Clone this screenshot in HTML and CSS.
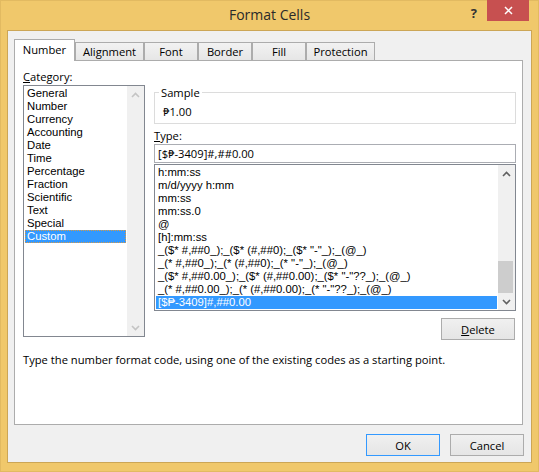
FILE: index.html
```html
<!DOCTYPE html>
<html>
<head>
<meta charset="utf-8">
<title>Format Cells</title>
<link rel="stylesheet" href="styles.css">
</head>
<body>
<div class="window">
  <div class="titlebar">
    <div></div>
    <div class="title">Format Cells</div>
    <div class="controls">
      <span class="help">?</span>
      <span class="close"><svg width="9" height="9" viewBox="0 0 9 9"><path d="M1 1L8 8M8 1L1 8" stroke="#fff" stroke-width="1.5" fill="none"/></svg></span>
    </div>
  </div>
  <div class="client">
    <div class="tabs">
      <div class="tab active tab-number">Number</div>
      <div class="tab tab-alignment">Alignment</div>
      <div class="tab tab-font">Font</div>
      <div class="tab tab-border">Border</div>
      <div class="tab tab-fill">Fill</div>
      <div class="tab tab-protection">Protection</div>
    </div>
    <div class="panel">
      <div class="cat-label"><u>C</u>ategory:</div>
      <div></div>
      <div class="listbox cat">
        <ul class="items">
          <li>General</li>
          <li>Number</li>
          <li>Currency</li>
          <li>Accounting</li>
          <li>Date</li>
          <li>Time</li>
          <li>Percentage</li>
          <li>Fraction</li>
          <li>Scientific</li>
          <li>Text</li>
          <li>Special</li>
          <li class="sel">Custom</li>
        </ul>
        <div class="vscroll disabled">
          <div class="arrow"><svg width="9" height="6" viewBox="0 0 9 6"><path d="M1 5L4.5 1.5L8 5" fill="none" stroke="#C4C4C4" stroke-width="1.6"/></svg></div>
          <div class="track"></div>
          <div class="arrow"><svg width="9" height="6" viewBox="0 0 9 6"><path d="M1 1L4.5 4.5L8 1" fill="none" stroke="#C4C4C4" stroke-width="1.6"/></svg></div>
        </div>
      </div>
      <div class="right">
        <fieldset class="sample">
          <legend>Sample</legend>
          <div class="sample-val">₱1.00</div>
        </fieldset>
        <div class="type-label"><u>T</u>ype:</div>
        <div class="type-input">[$₱-3409]#,##0.00</div>
        <div class="listbox types">
          <ul class="items">
            <li>h:mm:ss</li>
            <li>m/d/yyyy h:mm</li>
            <li>mm:ss</li>
            <li>mm:ss.0</li>
            <li>@</li>
            <li>[h]:mm:ss</li>
            <li>_($* #,##0_);_($* (#,##0);_($* "-"_);_(@_)</li>
            <li>_(* #,##0_);_(* (#,##0);_(* "-"_);_(@_)</li>
            <li>_($* #,##0.00_);_($* (#,##0.00);_($* "-"??_);_(@_)</li>
            <li>_(* #,##0.00_);_(* (#,##0.00);_(* "-"??_);_(@_)</li>
            <li class="sel">[$₱-3409]#,##0.00</li>
          </ul>
          <div class="vscroll">
            <div class="arrow"><svg width="9" height="6" viewBox="0 0 9 6"><path d="M1 5L4.5 1.5L8 5" fill="none" stroke="#606060" stroke-width="1.6"/></svg></div>
            <div class="track"><div class="thumb"></div></div>
            <div class="arrow"><svg width="9" height="6" viewBox="0 0 9 6"><path d="M1 1L4.5 4.5L8 1" fill="none" stroke="#606060" stroke-width="1.6"/></svg></div>
          </div>
        </div>
        <div class="delete-row"><button class="btn"><u>D</u>elete</button></div>
      </div>
      <div class="hint">Type the number format code, using one of the existing codes as a starting point.</div>
    </div>
    <div class="footer">
      <button class="btn default">OK</button>
      <button class="btn">Cancel</button>
    </div>
  </div>
</div>
</body>
</html>
```

FILE: styles.css
```css
* { box-sizing: border-box; }
html, body { margin: 0; padding: 0; }
body {
  width: 539px;
  height: 472px;
  overflow: hidden;
  font-family: "Open Sans", "Noto Sans", "DejaVu Sans", sans-serif;
  font-size: 11.2px;
  color: #000;
}
.window {
  width: 539px;
  height: 472px;
  background: #F0C86B;
  box-shadow: inset 0 0 0 1px #E2BA61;
  display: flex;
  flex-direction: column;
  padding: 0 7px 9px;
}
.titlebar {
  height: 30px;
  flex: none;
  display: grid;
  grid-template-columns: 1fr auto 1fr;
}
.title {
  align-self: center;
  font-size: 14px;
  line-height: 18px;
  color: #2a2a2a;
}
.controls {
  justify-self: end;
  display: flex;
  align-items: flex-start;
  margin-right: 3px;
}
.help {
  font-weight: bold;
  font-size: 13px;
  line-height: 16px;
  color: #333;
  margin-top: 5px;
  margin-right: 10px;
}
.close {
  width: 42px;
  height: 21px;
  background: #C75050;
  display: flex;
  align-items: center;
  justify-content: center;
}
.client {
  flex: 1;
  border: 1px solid #CCA656;
  background: #F0F0F0;
  padding: 8px 8px 6px 6px;
  display: flex;
  flex-direction: column;
}
.tabs {
  display: flex;
  align-items: flex-end;
  margin-bottom: -1px;
  position: relative;
  z-index: 1;
}
.tab {
  height: 18px;
  border: 1px solid #ACACAC;
  border-bottom: 0;
  margin-bottom: 1px;
  background: linear-gradient(#F2F2F2, #E6E6E6);
  text-align: center;
  line-height: 18px;
  white-space: nowrap;
}
.tab.active {
  height: 22px;
  margin-bottom: 0;
  background: #fff;
  line-height: 20px;
}
.tab-number { width: 61px; }
.tab-alignment { width: 69px; }
.tab-font { width: 54px; }
.tab-border { width: 54px; }
.tab-fill { width: 54px; }
.tab-protection { width: 69px; }
.panel {
  height: 365px;
  flex: none;
  border: 1px solid #ACACAC;
  background: #fff;
  padding: 7px 0 0 8px;
  display: grid;
  grid-template-columns: 122px 362px;
  grid-template-rows: 17px 255px auto;
  column-gap: 9px;
  align-content: start;
}
.cat-label { line-height: 17px; }
.listbox {
  border: 1px solid #828790;
  background: #fff;
  display: flex;
}
.cat { height: 252px; }
.items {
  flex: 1;
  min-width: 0;
  margin: 0;
  padding: 1px;
  list-style: none;
  overflow: hidden;
  font-family: "Liberation Sans", Arial, sans-serif;
  font-size: 11.3px;
}
.items li {
  height: 13px;
  line-height: 13px;
  padding-left: 2px;
  white-space: nowrap;
}
.items li.sel {
  background: #3399FF;
  color: #fff;
}
.cat li.sel {
  outline: 1px dotted #D99A45;
  outline-offset: -1px;
}
.vscroll {
  width: 17px;
  flex: none;
  background: #F0F0F0;
  display: flex;
  flex-direction: column;
}
.arrow {
  height: 17px;
  display: flex;
  align-items: center;
  justify-content: center;
}
.track {
  flex: 1;
  display: flex;
  flex-direction: column;
  justify-content: flex-end;
}
.thumb {
  height: 32px;
  background: #CDCDCD;
  margin: 0 2px 0 0;
}
.right {
  display: flex;
  flex-direction: column;
}
.sample {
  margin: 0;
  border: 1px solid #DCDCDC;
  padding: 0 4px 3px 4px;
  min-width: 0;
}
.sample legend {
  padding: 0 2px;
  line-height: 15px;
}
.sample-val {
  margin: 4px 0 0 4px;
  line-height: 16px;
}
.type-label {
  margin-top: 4px;
  line-height: 16px;
}
.type-input {
  height: 19px;
  border: 1px solid #ABADB3;
  padding-left: 3px;
  line-height: 17px;
  white-space: nowrap;
}
.types {
  margin-top: 1px;
  height: 147px;
}
.delete-row {
  display: flex;
  justify-content: flex-end;
  margin-top: 7px;
  margin-right: 1px;
}
.btn {
  width: 74px;
  height: 22px;
  border: 1px solid #ACACAC;
  background: linear-gradient(#F0F0F0, #E5E5E5);
  font: inherit;
  color: #000;
  padding: 0;
}
.btn.default { border-color: #3399FF; }
.hint {
  grid-column: 1 / -1;
  margin-top: 12px;
  line-height: 16px;
  white-space: nowrap;
}
.footer {
  display: flex;
  justify-content: flex-end;
  gap: 10px;
  margin-top: 9px;
  margin-right: -1px;
}
```
